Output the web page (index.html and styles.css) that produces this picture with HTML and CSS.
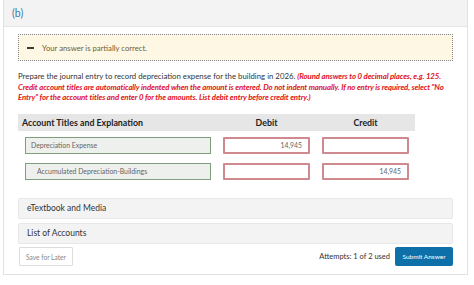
FILE: index.html
```html
<!DOCTYPE html>
<html>
<head>
<meta charset="utf-8">
<link rel="stylesheet" href="styles.css">
</head>
<body>
<div class="card">
  <div class="card-head">(b)</div>
  <div class="card-body">
    <div class="feedback">
      <span class="minus"></span>
      <span class="fb-text">Your answer is partially correct.</span>
    </div>
    <p class="prompt">Prepare the journal entry to record depreciation expense for the building in 2026. <em class="warn">(Round answers to 0 decimal places, e.g. 125. Credit account titles are automatically indented when the amount is entered. Do not indent manually. If no entry is required, select "No Entry" for the account titles and enter 0 for the amounts. List debit entry before credit entry.)</em></p>
    <div class="journal">
      <div class="jh jh-left">Account Titles and Explanation</div>
      <div class="jh">Debit</div>
      <div class="jh">Credit</div>

      <div class="cell acc-cell"><div class="acc">Depreciation Expense</div></div>
      <div class="cell"><div class="amt">14,945</div></div>
      <div class="cell"><div class="amt"></div></div>

      <div class="cell acc-cell"><div class="acc indent">Accumulated Depreciation-Buildings</div></div>
      <div class="cell"><div class="amt"></div></div>
      <div class="cell"><div class="amt">14,945</div></div>
    </div>
    <div class="panel panel-first">eTextbook and Media</div>
    <div class="panel">List of Accounts</div>
    <div class="footer">
      <button class="save">Save for Later</button>
      <div class="right">
        <span class="attempts">Attempts: 1 of 2 used</span>
        <button class="submit">Submit Answer</button>
      </div>
    </div>
  </div>
</div>
</body>
</html>
```
FILE: styles.css
```css
html, body {
  margin: 0;
  padding: 0;
  background: #ffffff;
}
body {
  font-family: Lato, "Open Sans", sans-serif;
  color: #333;
  width: 474px;
  height: 285px;
  overflow: hidden;
}
.card {
  margin-left: 3px;
  width: 465px;
  border: 1px solid #e2e2e2;
  border-top: none;
  background: #fff;
  box-sizing: border-box;
}
.card-head {
  background: #f3f3f3;
  border-bottom: 1px solid #e4e4e4;
  height: 27px;
  box-sizing: border-box;
  padding-left: 8px;
  line-height: 26px;
  font-size: 10.5px;
  color: #3d7ab0;
}
.card-body {
  padding: 7px 14px 8px 14px;
}
.feedback {
  height: 27px;
  box-sizing: border-box;
  border: 1px dotted #8a8a8a;
  background: #fdf7e3;
  display: flex;
  align-items: center;
  padding-left: 8px;
}
.minus {
  width: 7px;
  height: 2px;
  background: #3a3a30;
  margin-right: 8px;
}
.fb-text {
  font-size: 7.7px;
  color: #6e6134;
}
.prompt {
  margin: 10px 0 0 0;
  font-size: 7.8px;
  line-height: 10.7px;
  color: #333;
  width: 442px;
}
.warn {
  color: #e0101c;
  font-weight: bold;
  font-style: italic;
  letter-spacing: -0.1px;
}
.journal {
  margin-top: 11px;
  width: 397px;
  display: grid;
  grid-template-columns: 199px 99px 99px;
}
.jh {
  background: #e6e6e6;
  height: 17px;
  line-height: 17px;
  font-size: 8.8px;
  font-weight: bold;
  color: #222;
  text-align: center;
}
.jh-left {
  text-align: left;
  padding-left: 4px;
}
.cell {
  padding: 6px 6px 3px 6px;
}
.acc-cell {
  padding-left: 7px;
}
.acc {
  height: 17px;
  box-sizing: border-box;
  border: 1px solid #7f9e80;
  background: #eef0ed;
  font-size: 6.9px;
  line-height: 15px;
  color: #666;
  padding-left: 5px;
}
.acc.indent {
  padding-left: 11px;
}
.amt {
  height: 17px;
  box-sizing: border-box;
  border: 2px solid #cf8a90;
  border-radius: 1px;
  background: #fff;
  font-size: 6.9px;
  line-height: 13px;
  color: #666;
  text-align: right;
  padding-right: 6px;
}
.panel {
  height: 21px;
  box-sizing: border-box;
  background: #f3f3f3;
  border: 1px solid #e8e8e8;
  border-radius: 2px;
  font-size: 8.5px;
  line-height: 19px;
  padding-left: 8px;
  color: #333;
  margin-top: 4px;
}
.panel-first {
  margin-top: 15px;
}
.footer {
  margin-top: 3px;
  display: flex;
  justify-content: space-between;
  align-items: center;
}
.save {
  height: 19px;
  width: 54px;
  margin-left: 1px;
  background: #fff;
  border: 1px solid #ddd;
  border-radius: 1px;
  font-family: Lato, sans-serif;
  font-size: 6.6px;
  color: #888;
  padding: 0;
}
.right {
  display: flex;
  align-items: center;
}
.attempts {
  font-size: 7.5px;
  color: #333;
  margin-right: 5px;
}
.submit {
  height: 19px;
  width: 58px;
  background: #0d70a8;
  border: none;
  border-radius: 2px;
  font-family: Lato, sans-serif;
  font-size: 6.5px;
  color: #fff;
  padding: 0;
}
```
